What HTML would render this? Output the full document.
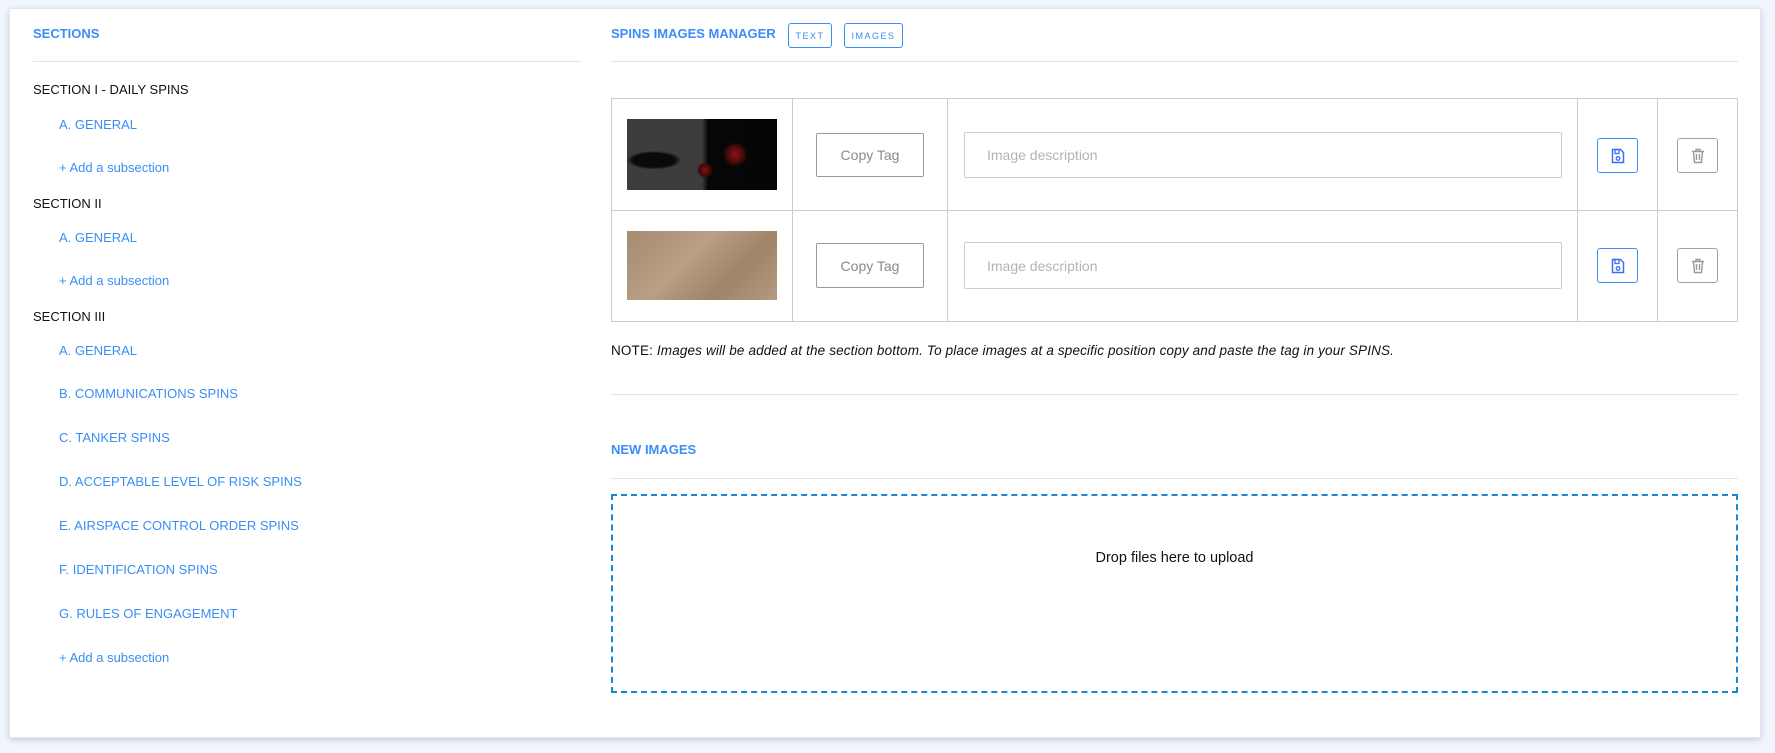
<!DOCTYPE html>
<html><head><meta charset="utf-8"><style>
*{box-sizing:border-box;margin:0;padding:0}
body{width:1775px;height:753px;background:#f1f6fc;font-family:"Liberation Sans",sans-serif;position:relative;overflow:hidden;color:#222}
.card{position:absolute;left:9px;top:8px;width:1752px;height:730px;background:#fff;border:1px solid #e3e6ee;box-shadow:0 2px 6px rgba(120,130,170,.35)}
.a{position:absolute;white-space:nowrap}
.t{color:#3a8ef6;font-size:13px;font-weight:bold}
.b{color:#111;font-size:13px}
.l{color:#3a8ef6;font-size:13px}
.hr{position:absolute;height:1px;background:#e2e4e8}
.tag{position:absolute;border:1.5px solid #3a8ef6;border-radius:3px;color:#3a8ef6;font-size:9px;letter-spacing:1.5px;display:flex;align-items:center;justify-content:center}
.tbl{position:absolute;border:1px solid #c9ccd2}
.v{position:absolute;width:1px;background:#c9ccd2}
.btn{position:absolute;border:1px solid #9a9a9a;border-radius:2px;color:#8a8a8a;font-size:14px;display:flex;align-items:center;justify-content:center}
.inp{position:absolute;border:1px solid #c9ccd2;border-radius:2px;color:#b3b3b3;font-size:14px;display:flex;align-items:center;padding-left:22px}
.sv{position:absolute;border:1px solid #3a8ef6;border-radius:3px;width:41px;height:35px;display:flex;align-items:center;justify-content:center}
.dl{position:absolute;border:1px solid #a3a3a3;border-radius:3px;width:41px;height:35px;display:flex;align-items:center;justify-content:center}
</style></head><body>
<div class="card"></div>
<div class="a t" style="left:33px;top:26px">SECTIONS</div>
<div class="hr" style="left:33px;top:61px;width:548px"></div>
<div class="a b" style="left:33px;top:82px">SECTION I - DAILY SPINS</div>
<div class="a l" style="left:59px;top:117px">A. GENERAL</div>
<div class="a l" style="left:59px;top:160px">+ Add a subsection</div>
<div class="a b" style="left:33px;top:196px">SECTION II</div>
<div class="a l" style="left:59px;top:230px">A. GENERAL</div>
<div class="a l" style="left:59px;top:273px">+ Add a subsection</div>
<div class="a b" style="left:33px;top:309px">SECTION III</div>
<div class="a l" style="left:59px;top:343px">A. GENERAL</div>
<div class="a l" style="left:59px;top:386px">B. COMMUNICATIONS SPINS</div>
<div class="a l" style="left:59px;top:430px">C. TANKER SPINS</div>
<div class="a l" style="left:59px;top:474px">D. ACCEPTABLE LEVEL OF RISK SPINS</div>
<div class="a l" style="left:59px;top:518px">E. AIRSPACE CONTROL ORDER SPINS</div>
<div class="a l" style="left:59px;top:562px">F. IDENTIFICATION SPINS</div>
<div class="a l" style="left:59px;top:606px">G. RULES OF ENGAGEMENT</div>
<div class="a l" style="left:59px;top:650px">+ Add a subsection</div>

<div class="a t" style="left:611px;top:26px">SPINS IMAGES MANAGER</div>
<div class="tag" style="left:788px;top:23px;width:44px;height:25px">TEXT</div>
<div class="tag" style="left:844px;top:23px;width:59px;height:25px">IMAGES</div>
<div class="hr" style="left:611px;top:61px;width:1127px"></div>

<div class="tbl" style="left:611px;top:98px;width:1127px;height:224px"></div>
<div class="hr" style="left:611px;top:210px;width:1127px;background:#c9ccd2"></div>
<div class="v" style="left:792px;top:98px;height:224px"></div>
<div class="v" style="left:947px;top:98px;height:224px"></div>
<div class="v" style="left:1577px;top:98px;height:224px"></div>
<div class="v" style="left:1657px;top:98px;height:224px"></div>

<div class="a" style="left:627px;top:119px;width:150px;height:71px;background:radial-gradient(circle at 72% 50%,#8a1515 0,#4a0a0a 7%,transparent 11%),radial-gradient(circle at 52% 72%,#8a1212 0,#400808 6%,transparent 9%),radial-gradient(ellipse at 18% 58%,#0a0a0a 0,#0a0a0a 12%,transparent 16%),linear-gradient(90deg,#3d3d3d 0,#3d3d3d 50%,#060606 54%,#050505 100%)"></div>
<div class="a" style="left:627px;top:231px;width:150px;height:69px;background:linear-gradient(135deg,#a58b70,#b89f85 40%,#9e8468 70%,#b59a80)"></div>

<div class="btn" style="left:816px;top:133px;width:108px;height:44px">Copy Tag</div>
<div class="btn" style="left:816px;top:243px;width:108px;height:45px">Copy Tag</div>
<div class="inp" style="left:964px;top:132px;width:598px;height:46px">Image description</div>
<div class="inp" style="left:964px;top:242px;width:598px;height:47px">Image description</div>

<div class="sv" style="left:1597px;top:138px"><svg width="14" height="16" viewBox="0 0 14 16"><path d="M1.5 1.5h8l3 3v10h-11z" fill="none" stroke="#3a6ff6" stroke-width="1.5"/><rect x="4" y="1.5" width="4" height="4" fill="none" stroke="#3a6ff6" stroke-width="1.3"/><circle cx="7" cy="10.5" r="1.8" fill="none" stroke="#3a6ff6" stroke-width="1.3"/></svg></div>
<div class="sv" style="left:1597px;top:248px"><svg width="14" height="16" viewBox="0 0 14 16"><path d="M1.5 1.5h8l3 3v10h-11z" fill="none" stroke="#3a6ff6" stroke-width="1.5"/><rect x="4" y="1.5" width="4" height="4" fill="none" stroke="#3a6ff6" stroke-width="1.3"/><circle cx="7" cy="10.5" r="1.8" fill="none" stroke="#3a6ff6" stroke-width="1.3"/></svg></div>
<div class="dl" style="left:1677px;top:138px"><svg width="14" height="16" viewBox="0 0 14 16"><path d="M1 3.5h12M5 3.5v-2h4v2M2.5 3.5l1 11h7l1-11M5.5 6v6M8.5 6v6" fill="none" stroke="#999" stroke-width="1.4"/></svg></div>
<div class="dl" style="left:1677px;top:248px"><svg width="14" height="16" viewBox="0 0 14 16"><path d="M1 3.5h12M5 3.5v-2h4v2M2.5 3.5l1 11h7l1-11M5.5 6v6M8.5 6v6" fill="none" stroke="#999" stroke-width="1.4"/></svg></div>

<div class="a" style="left:611px;top:343px;font-size:13.5px;color:#111;letter-spacing:0.15px">NOTE: <i>Images will be added at the section bottom. To place images at a specific position copy and paste the tag in your SPINS.</i></div>
<div class="hr" style="left:611px;top:394px;width:1127px"></div>
<div class="a t" style="left:611px;top:442px">NEW IMAGES</div>
<div class="hr" style="left:611px;top:478px;width:1127px"></div>
<div class="a" style="left:611px;top:494px;width:1127px;height:199px;border:2px dashed #1a86d6"></div>
<div class="a" style="left:611px;top:550px;width:1127px;text-align:center;font-size:14.5px;color:#111">Drop files here to upload</div>
</body></html>
